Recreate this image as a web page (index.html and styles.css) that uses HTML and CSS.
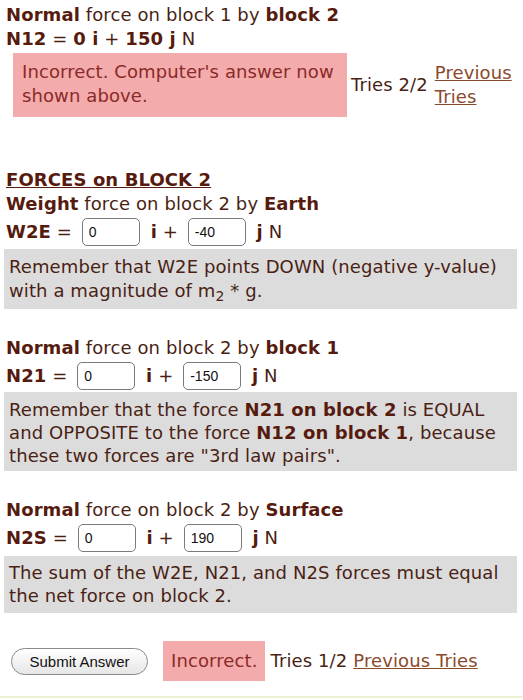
FILE: index.html
```html
<!DOCTYPE html>
<html>
<head>
<meta charset="utf-8">
<link rel="stylesheet" href="styles.css">
</head>
<body>
<div class="page">
  <div class="line"><b>Normal</b> force on block 1 by <b>block 2</b></div>
  <div class="line"><b>N12</b> = <b>0 i</b> + <b>150 j</b> N</div>
  <div class="status-row">
    <div class="bad-box wide"><span class="hl">Incorrect. Computer's answer now</span><span class="hl">shown above.</span></div>
    <div class="tries">Tries 2/2</div>
    <a class="prev narrow" href="#"><span class="hl">Previous</span><span class="hl">Tries</span></a>
  </div>

  <div class="line heading"><b><u>FORCES on BLOCK 2</u></b></div>
  <div class="line"><b>Weight</b> force on block 2 by <b>Earth</b></div>
  <div class="eq-row"><b>W2E</b>&nbsp;=&nbsp;<input class="num" type="text" value="0">&nbsp;<b>i</b> +&nbsp;<input class="num" type="text" value="-40">&nbsp;<b>j</b> N</div>
  <div class="hint h1"><span class="hl">Remember that W2E points DOWN (negative y-value)</span><span class="hl">with a magnitude of m<sub>2</sub> * g.</span></div>

  <div class="line section"><b>Normal</b> force on block 2 by <b>block 1</b></div>
  <div class="eq-row"><b>N21</b>&nbsp;=&nbsp;<input class="num" type="text" value="0">&nbsp;<b>i</b> +&nbsp;<input class="num" type="text" value="-150">&nbsp;<b>j</b> N</div>
  <div class="hint h2"><span class="hl">Remember that the force <b>N21 on block 2</b> is EQUAL</span><span class="hl">and OPPOSITE to the force <b>N12 on block 1</b>, because</span><span class="hl">these two forces are "3rd law pairs".</span></div>

  <div class="line section"><b>Normal</b> force on block 2 by <b>Surface</b></div>
  <div class="eq-row"><b>N2S</b>&nbsp;=&nbsp;<input class="num" type="text" value="0">&nbsp;<b>i</b> +&nbsp;<input class="num" type="text" value="190">&nbsp;<b>j</b> N</div>
  <div class="hint h3"><span class="hl">The sum of the W2E, N21, and N2S forces must equal</span><span class="hl">the net force on block 2.</span></div>

  <div class="submit-row">
    <button class="submit" type="button">Submit Answer</button>
    <div class="bad-box small">Incorrect.</div>
    <div class="tries">Tries 1/2</div>
    <a class="prev" href="#">Previous Tries</a>
  </div>
  <div class="next-rule"></div>
</div>
</body>
</html>
```
FILE: styles.css
```css
html, body {
  margin: 0;
  padding: 0;
  background: #ffffff;
}
.page {
  padding: 3px 3px 0 6px;
  font-family: "DejaVu Sans", Verdana, sans-serif;
  font-size: 18px;
  letter-spacing: 0.1px;
  line-height: 24px;
  color: #4a1f14;
}
b { color: #561b0e; }
.line { white-space: nowrap; }
.hl { display: block; white-space: nowrap; }
.status-row {
  display: flex;
  align-items: center;
  margin-top: 2px;
  margin-left: 7px;
}
.bad-box {
  background: #f4abab;
  color: #8a2a28;
}
.bad-box.wide {
  width: 316px;
  padding: 7px 9px 9px 9px;
  line-height: 24px;
}
.tries {
  margin-left: 4px;
  white-space: nowrap;
}
.prev {
  color: #8a4a2c;
  text-decoration: underline;
  margin-left: 7px;
}
.prev.narrow {
  width: 80px;
  line-height: 24px;
}
.heading { margin-top: 51px; }
.eq-row {
  height: 32px;
  display: flex;
  align-items: center;
  white-space: pre;
}
.num {
  box-sizing: border-box;
  width: 58px;
  height: 28px;
  margin: 0 5px 0 4px;
  padding: 0 6px;
  border: 1px solid #7a7a7a;
  border-radius: 5px;
  font-family: "Liberation Sans", Arial, sans-serif;
  font-size: 14px;
  letter-spacing: 0;
  color: #111;
  background: #fff;
}
.hint {
  background: #dcdcdc;
  margin: 1px 3px 0 -2px;
  padding: 6px 5px 6px 5px;
  line-height: 24px;
}
.hint sub {
  font-size: 14px;
  line-height: 0;
  vertical-align: -4px;
}
.h2 { margin-top: 0; padding-top: 6px; padding-bottom: 4px; line-height: 23px; }
.h3 { margin-top: 2px; padding-top: 5px; padding-bottom: 6px; line-height: 23px; }
.section { margin-top: 27px; }
.submit-row {
  display: flex;
  align-items: center;
  margin-top: 28px;
}
.submit {
  margin-left: 5px;
  width: 137px;
  height: 27px;
  border: 1px solid #8a8a8a;
  border-radius: 14px;
  background: linear-gradient(#ffffff, #e6e6e6);
  font-family: "Liberation Sans", Arial, sans-serif;
  font-size: 15px;
  color: #111;
  padding: 0;
}
.bad-box.small {
  margin-left: 15px;
  height: 40px;
  padding: 0 8px;
  display: flex;
  align-items: center;
}
.submit-row .tries { margin-left: 5px; }
.submit-row .prev { margin-left: 6px; }
.next-rule {
  margin-top: 15px;
  border-top: 2px solid #f0f0d4;
  margin-left: -6px;
  margin-right: -3px;
}
```
